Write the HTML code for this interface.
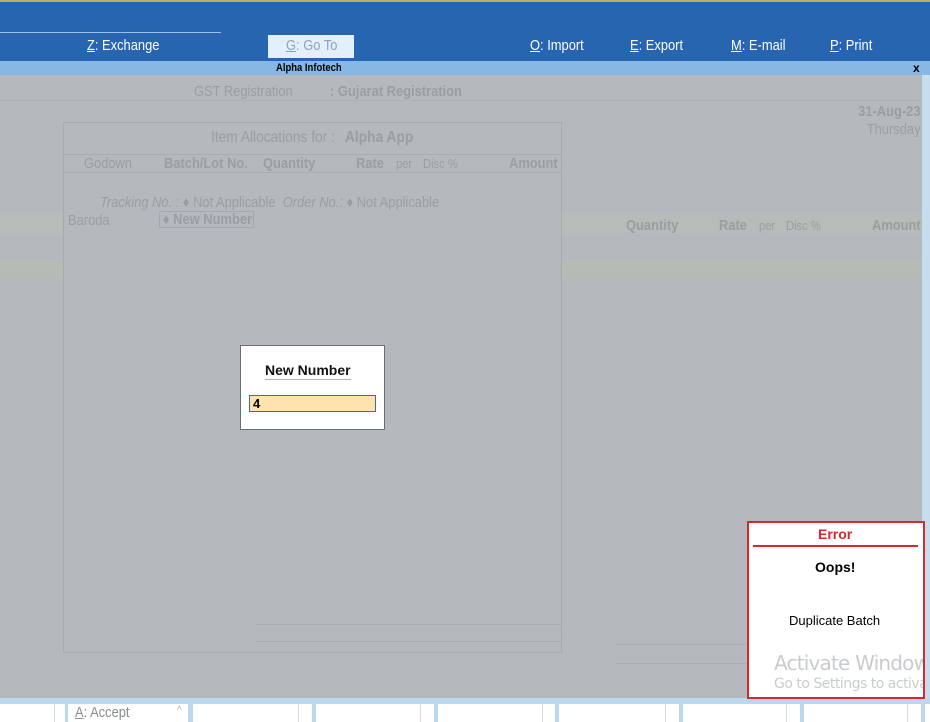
<!DOCTYPE html>
<html><head><meta charset="utf-8"><style>
*{margin:0;padding:0;box-sizing:border-box}
body{width:930px;height:722px;overflow:hidden;background:#b5b9bd;font-family:"Liberation Sans",sans-serif;position:relative}
.a{position:absolute;white-space:nowrap}
.n{transform:scaleX(.86);transform-origin:left top}
.r{transform:scaleX(.86);transform-origin:right top}
.top{left:0;top:0;width:930px;height:61px;background:#2865b0;border-top:2px solid #c8a860}
.m{color:#fff;font-size:15px;top:37px}
.g{color:#9a9ea3;font-size:15px}
.gb{color:#9a9ea3;font-size:15px;font-weight:bold}
</style></head><body>
<div class="a top"></div>
<div class="a" style="left:0;top:32px;width:221px;height:1px;background:#9cc0e8"></div>
<div class="a m n" style="left:87px"><u>Z</u>: Exchange</div>
<div class="a" style="left:268px;top:35px;width:86px;height:23px;background:#e3effb"></div>
<div class="a m n" style="left:286px;color:#8aa3bf"><u>G</u>: Go To</div>
<div class="a m n" style="left:530px"><u>O</u>: Import</div>
<div class="a m n" style="left:630px"><u>E</u>: Export</div>
<div class="a m n" style="left:731px"><u>M</u>: E-mail</div>
<div class="a m n" style="left:830px"><u>P</u>: Print</div>
<div class="a" style="left:0;top:61px;width:930px;height:14px;background:#86b8e3"></div>
<div class="a n" style="left:276px;top:62px;font-size:11px;font-weight:bold;color:#000">Alpha Infotech</div>
<div class="a" style="left:913px;top:61px;font-size:12px;font-weight:bold;color:#000">x</div>
<div class="a" style="left:922px;top:75px;width:8px;height:623px;background:#c6dcef"></div>
<div class="a g n" style="left:194px;top:83px">GST Registration</div>
<div class="a gb n" style="left:330px;top:83px">: Gujarat Registration</div>
<div class="a" style="left:0;top:100px;width:922px;height:1px;background:#adb1b5"></div>
<div class="a gb r" style="right:9px;top:103px">31-Aug-23</div>
<div class="a g r" style="right:9px;top:121px">Thursday</div>
<div class="a" style="left:0;top:214px;width:922px;height:20px;background:#b7bbb9"></div>
<div class="a" style="left:0;top:260px;width:922px;height:18px;background:#b7bbb6"></div>
<div class="a gb n" style="left:626px;top:217px">Quantity</div>
<div class="a gb n" style="left:719px;top:217px">Rate</div>
<div class="a g n" style="left:759px;top:218px;font-size:13px">per</div>
<div class="a g n" style="left:786px;top:218px;font-size:13px">Disc %</div>
<div class="a gb n" style="left:872px;top:217px">Amount</div>
<div class="a" style="left:63px;top:122px;width:499px;height:531px;border:1px solid #a7abaf;background:#b5b9bd"></div>
<div class="a g n" style="left:211px;top:129px;font-size:16px">Item Allocations for :</div>
<div class="a gb n" style="left:345px;top:129px;font-size:16px">Alpha App</div>
<div class="a" style="left:64px;top:154px;width:497px;height:1px;background:#a9adb1"></div>
<div class="a g n" style="left:84px;top:155px">Godown</div>
<div class="a gb n" style="left:164px;top:155px">Batch/Lot No.</div>
<div class="a gb n" style="left:263px;top:155px">Quantity</div>
<div class="a gb n" style="left:356px;top:155px">Rate</div>
<div class="a g n" style="left:396px;top:156px;font-size:13px">per</div>
<div class="a g n" style="left:423px;top:156px;font-size:13px">Disc %</div>
<div class="a gb n" style="left:509px;top:155px">Amount</div>
<div class="a" style="left:64px;top:172px;width:497px;height:1px;background:#a9adb1"></div>
<div class="a g n" style="left:100px;top:194px;font-size:15px"><i>Tracking No. :</i> ♦ Not Applicable &nbsp;<i>Order No.:</i> ♦ Not Applicable</div>
<div class="a g n" style="left:68px;top:212px">Baroda</div>
<div class="a" style="left:159px;top:211px;width:95px;height:17px;border:1px solid #a2a8ad"></div>
<div class="a gb n" style="left:163px;top:211px">♦ New Number</div>
<div class="a" style="left:255px;top:624px;width:306px;height:1px;background:#a9adb1"></div>
<div class="a" style="left:255px;top:641px;width:306px;height:1px;background:#a9adb1"></div>
<div class="a" style="left:615px;top:644px;width:135px;height:1px;background:#a9adb1"></div>
<div class="a" style="left:615px;top:663px;width:135px;height:1px;background:#a9adb1"></div>
<div class="a" style="left:240px;top:345px;width:145px;height:85px;background:#fff;border:1px solid #6a6e72"></div>
<div class="a" style="left:265px;top:362px;font-size:14px;font-weight:bold;color:#111;border-bottom:1px solid #b0b4b8;padding-bottom:1px">New Number</div>
<div class="a" style="left:249px;top:395px;width:127px;height:17px;background:#fde4ac;border:1px solid #2b7a8c;font-weight:bold;font-size:13px;padding-left:3px;line-height:15px">4</div>
<div class="a" style="left:0;top:698px;width:930px;height:24px;background:#bcd8ef"></div>
<div class="a" style="left:0;top:704px;width:930px;height:18px;background:#fff"></div>
<div class="a" style="left:54px;top:704px;width:14px;height:18px;background:#fff;border-left:1px solid #d8dde2;border-right:3px solid #bcd8ef"></div>
<div class="a" style="left:188px;top:704px;width:5px;height:18px;background:#bcd8ef"></div>
<div class="a" style="left:298px;top:704px;width:18px;height:18px;border-left:1px solid #d8dde2;border-right:4px solid #bcd8ef"></div>
<div class="a" style="left:420px;top:704px;width:18px;height:18px;border-left:1px solid #d8dde2;border-right:4px solid #bcd8ef"></div>
<div class="a" style="left:542px;top:704px;width:17px;height:18px;border-left:1px solid #d8dde2;border-right:4px solid #bcd8ef"></div>
<div class="a" style="left:665px;top:704px;width:18px;height:18px;border-left:1px solid #d8dde2;border-right:4px solid #bcd8ef"></div>
<div class="a" style="left:786px;top:704px;width:18px;height:18px;border-left:1px solid #d8dde2;border-right:4px solid #bcd8ef"></div>
<div class="a" style="left:907px;top:704px;width:18px;height:18px;border-left:1px solid #d8dde2;border-right:4px solid #bcd8ef"></div>
<div class="a n" style="left:75px;top:704px;font-size:15px;color:#8a8e92"><u>A</u>: Accept</div>
<div class="a" style="left:177px;top:705px;font-size:10px;color:#b0b4b8">^</div>
<div class="a" style="left:747px;top:521px;width:178px;height:178px;background:#fff;border:2px solid #d42a2a"></div>
<div class="a" style="left:818px;top:526px;font-size:14px;font-weight:bold;color:#d42a2a">Error</div>
<div class="a" style="left:753px;top:545px;width:165px;height:2px;background:#d42a2a"></div>
<div class="a" style="left:815px;top:559px;font-size:14px;font-weight:bold;color:#000">Oops!</div>
<div class="a" style="left:789px;top:613px;font-size:13px;color:#000">Duplicate Batch</div>
<div class="a" style="left:774px;top:651px;font-size:20px;color:#c9cccf;width:149px;overflow:hidden;font-family:'DejaVu Sans',sans-serif;letter-spacing:-0.8px">Activate Windows</div>
<div class="a" style="left:774px;top:676px;font-size:14px;color:#c9cccf;width:149px;overflow:hidden;font-family:'DejaVu Sans',sans-serif;letter-spacing:-0.5px">Go to Settings to activate</div>
</body></html>
